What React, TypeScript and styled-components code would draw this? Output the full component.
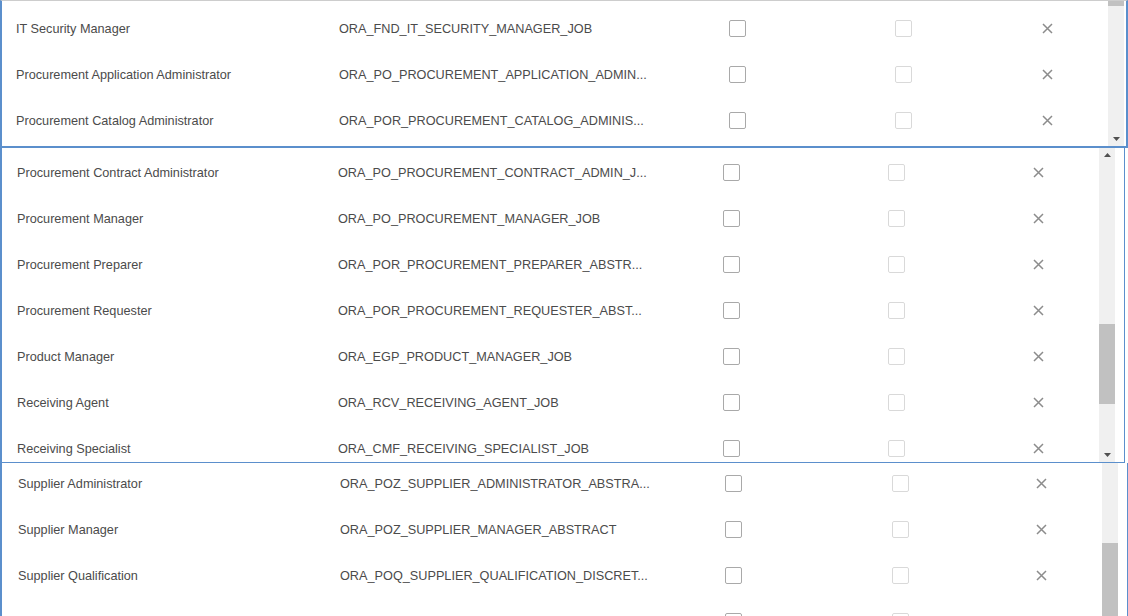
import React from 'react';
import styled, { createGlobalStyle } from 'styled-components';

const GlobalStyle = createGlobalStyle`
  html, body {
    margin: 0;
    padding: 0;
    background: #ffffff;
    overflow: hidden;
  }
  body {
    font-family: "Liberation Sans", Arial, sans-serif;
  }
`;

const BLUE = '#5b8fcc';

type Role = { name: string; code: string };

type PanelSpec = {
  height: number;
  width: number;
  topBorder: string;
  bottomBorder: string;
  rightBorder: number;
  scrollGap: number;
  offsetTop: number;
  padLeft: number;
  cols: string;
  thumbTop: number;
  thumbHeight: number;
  upArrow: boolean;
  downArrow: boolean;
  rows: Role[];
};

const panels: PanelSpec[] = [
  {
    height: 148,
    width: 1128,
    topBorder: '1px solid #cdcdcd',
    bottomBorder: `2px solid ${BLUE}`,
    rightBorder: 2,
    scrollGap: 2,
    offsetTop: 4,
    padLeft: 14,
    cols: '323px 390px 166px 147px 1fr',
    thumbTop: 0,
    thumbHeight: 5,
    upArrow: false,
    downArrow: true,
    rows: [
      { name: 'IT Security Manager', code: 'ORA_FND_IT_SECURITY_MANAGER_JOB' },
      { name: 'Procurement Application Administrator', code: 'ORA_PO_PROCUREMENT_APPLICATION_ADMIN...' },
      { name: 'Procurement Catalog Administrator', code: 'ORA_POR_PROCUREMENT_CATALOG_ADMINIS...' },
    ],
  },
  {
    height: 315,
    width: 1125,
    topBorder: 'none',
    bottomBorder: `1px solid ${BLUE}`,
    rightBorder: 1,
    scrollGap: 9,
    offsetTop: 1,
    padLeft: 15,
    cols: '321px 385px 165px 145px 1fr',
    thumbTop: 176,
    thumbHeight: 80,
    upArrow: true,
    downArrow: true,
    rows: [
      { name: 'Procurement Contract Administrator', code: 'ORA_PO_PROCUREMENT_CONTRACT_ADMIN_J...' },
      { name: 'Procurement Manager', code: 'ORA_PO_PROCUREMENT_MANAGER_JOB' },
      { name: 'Procurement Preparer', code: 'ORA_POR_PROCUREMENT_PREPARER_ABSTR...' },
      { name: 'Procurement Requester', code: 'ORA_POR_PROCUREMENT_REQUESTER_ABST...' },
      { name: 'Product Manager', code: 'ORA_EGP_PRODUCT_MANAGER_JOB' },
      { name: 'Receiving Agent', code: 'ORA_RCV_RECEIVING_AGENT_JOB' },
      { name: 'Receiving Specialist', code: 'ORA_CMF_RECEIVING_SPECIALIST_JOB' },
    ],
  },
  {
    height: 153,
    width: 1128,
    topBorder: 'none',
    bottomBorder: 'none',
    rightBorder: 1,
    scrollGap: 9,
    offsetTop: -3,
    padLeft: 16,
    cols: '322px 385px 167px 144px 1fr',
    thumbTop: 80,
    thumbHeight: 120,
    upArrow: false,
    downArrow: false,
    rows: [
      { name: 'Supplier Administrator', code: 'ORA_POZ_SUPPLIER_ADMINISTRATOR_ABSTRA...' },
      { name: 'Supplier Manager', code: 'ORA_POZ_SUPPLIER_MANAGER_ABSTRACT' },
      { name: 'Supplier Qualification', code: 'ORA_POQ_SUPPLIER_QUALIFICATION_DISCRET...' },
      { name: 'Supplier Self Service Administrator', code: 'ORA_POS_SUPPLIER_SELF_SERVICE_ADMIN...' },
    ],
  },
];

const Page = styled.div`
  display: flex;
  flex-direction: column;
  width: 1128px;
  height: 616px;
  overflow: hidden;
`;

const Panel = styled.section<{ $h: number; $w: number; $top: string; $bottom: string; $right: number }>`
  box-sizing: border-box;
  flex: none;
  display: flex;
  width: ${(p) => p.$w}px;
  height: ${(p) => p.$h}px;
  border-left: 2px solid ${BLUE};
  border-right: ${(p) => p.$right}px solid ${BLUE};
  border-top: ${(p) => p.$top};
  border-bottom: ${(p) => p.$bottom};
  overflow: hidden;
  background: #fff;
`;

const Table = styled.div<{ $offset: number }>`
  flex: 1;
  min-width: 0;
  display: flex;
  flex-direction: column;
  margin-top: ${(p) => p.$offset}px;
`;

const Row = styled.div<{ $cols: string; $pad: number }>`
  flex: none;
  height: 46px;
  display: grid;
  grid-template-columns: ${(p) => p.$cols};
  align-items: center;
  padding-left: ${(p) => p.$pad}px;
  font-size: 12.7px;
  color: #4b4b4b;
  white-space: nowrap;
`;

const Cell = styled.div`
  overflow: hidden;
`;

const Label = styled.div`
  overflow: hidden;
  padding-top: 1px;
`;

const Check = styled.span<{ $disabled?: boolean }>`
  display: block;
  box-sizing: border-box;
  width: 17px;
  height: 17px;
  border: 1px solid ${(p) => (p.$disabled ? '#d9d9d9' : '#a9a9a9')};
  border-radius: 2px;
  background: #fff;
`;

const Remove = styled.span`
  display: flex;
  width: 11px;
  height: 11px;
`;

const Scroll = styled.div<{ $gap: number }>`
  flex: none;
  width: 16px;
  margin-right: ${(p) => p.$gap}px;
  display: flex;
  flex-direction: column;
  background: #f0f0f0;
`;

const Spacer = styled.div<{ $h: number }>`
  flex: none;
  height: ${(p) => p.$h}px;
`;

const Thumb = styled.div<{ $h: number }>`
  flex: none;
  height: ${(p) => p.$h}px;
  background: #c1c1c1;
`;

const Arrow = styled.div<{ $down?: boolean }>`
  flex: none;
  height: 14px;
  display: flex;
  align-items: center;
  justify-content: center;
  margin-top: ${(p) => (p.$down ? 'auto' : '0')};
`;

const Fill = styled.div`
  flex: 1;
`;

const CloseIcon = () => (
  <svg width="11" height="11" viewBox="0 0 11 11">
    <path d="M1 1 L10 10 M10 1 L1 10" stroke="#8c8c8c" strokeWidth="1.5" fill="none" />
  </svg>
);

const Triangle = ({ down }: { down?: boolean }) => (
  <svg width="7" height="4" viewBox="0 0 7 4">
    <path d={down ? 'M0 0 L7 0 L3.5 4 Z' : 'M0 4 L7 4 L3.5 0 Z'} fill="#505050" />
  </svg>
);

const ScrollBar = ({ spec }: { spec: PanelSpec }) => {
  const arrowH = spec.upArrow ? 14 : 0;
  return (
    <Scroll $gap={spec.scrollGap}>
      {spec.upArrow && (
        <Arrow>
          <Triangle />
        </Arrow>
      )}
      <Spacer $h={Math.max(0, spec.thumbTop - arrowH)} />
      <Thumb $h={spec.thumbHeight} />
      {spec.downArrow ? (
        <Arrow $down>
          <Triangle down />
        </Arrow>
      ) : (
        <Fill />
      )}
    </Scroll>
  );
};

export default function App() {
  return (
    <>
      <GlobalStyle />
      <Page>
        {panels.map((spec, i) => (
          <Panel
            key={i}
            $h={spec.height}
            $w={spec.width}
            $top={spec.topBorder}
            $bottom={spec.bottomBorder}
            $right={spec.rightBorder}
          >
            <Table $offset={spec.offsetTop}>
              {spec.rows.map((r) => (
                <Row key={r.name} $cols={spec.cols} $pad={spec.padLeft}>
                  <Label>{r.name}</Label>
                  <Label>{r.code}</Label>
                  <Cell>
                    <Check />
                  </Cell>
                  <Cell>
                    <Check $disabled />
                  </Cell>
                  <Cell>
                    <Remove>
                      <CloseIcon />
                    </Remove>
                  </Cell>
                </Row>
              ))}
            </Table>
            <ScrollBar spec={spec} />
          </Panel>
        ))}
      </Page>
    </>
  );
}
